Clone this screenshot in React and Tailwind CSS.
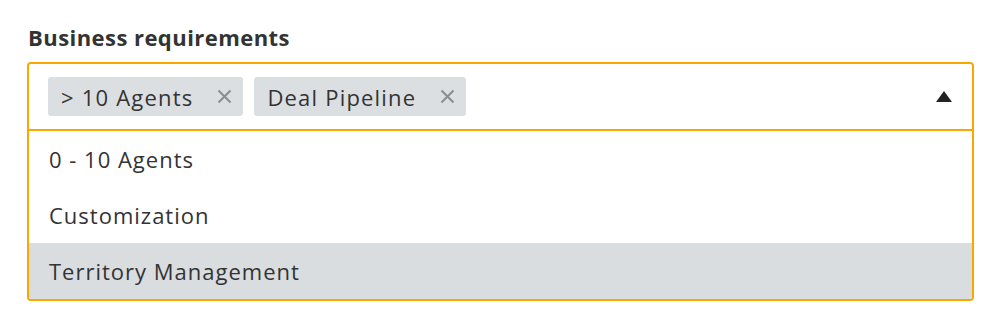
import React from "react";

function XIcon() {
  return (
    <svg width="15" height="15" viewBox="0 0 15 15" className="ml-[24px] mr-[11px]">
      <path d="M1.5 1.5 L13.5 13.5 M13.5 1.5 L1.5 13.5" stroke="#8a8d90" strokeWidth="2" strokeLinecap="butt" />
    </svg>
  );
}

function Chip({ label }) {
  return (
    <div className="flex items-center h-[39px] rounded-[3px] bg-[#dcdfe2] pl-[13px]">
      <span className="text-[22px] tracking-[1.2px] text-[#333] leading-none">{label}</span>
      <XIcon />
    </div>
  );
}

const opt = "flex items-center h-[56px] pl-[20px] pt-[1px] text-[22px] tracking-[1px] text-[#333]";

export default function App() {
  return (
    <div className="w-[992px] h-[316px] bg-white pl-[27px] pr-[18px] pt-[23px] font-['Open_Sans',sans-serif]">
      <div className="text-[22px] font-bold tracking-[0.45px] text-[#333] leading-[28px] pl-[1px]">Business requirements</div>
      <div className="mt-[11px] border-2 border-[#f9a800] rounded-[4px] overflow-hidden">
        <div className="flex items-center h-[67px] border-b-2 border-[#f9a800] pl-[19px] pr-[20px]">
          <div className="flex items-center gap-[11px] flex-1">
            <Chip label="> 10 Agents" />
            <Chip label="Deal Pipeline" />
          </div>
          <svg width="16" height="11" viewBox="0 0 16 11">
            <path d="M8 0 L16 11 L0 11 Z" fill="#222" />
          </svg>
        </div>
        <div className={opt}>0 - 10 Agents</div>
        <div className={opt}>Customization</div>
        <div className={opt + " bg-[#dadde0]"}>Territory Management</div>
      </div>
    </div>
  );
}
